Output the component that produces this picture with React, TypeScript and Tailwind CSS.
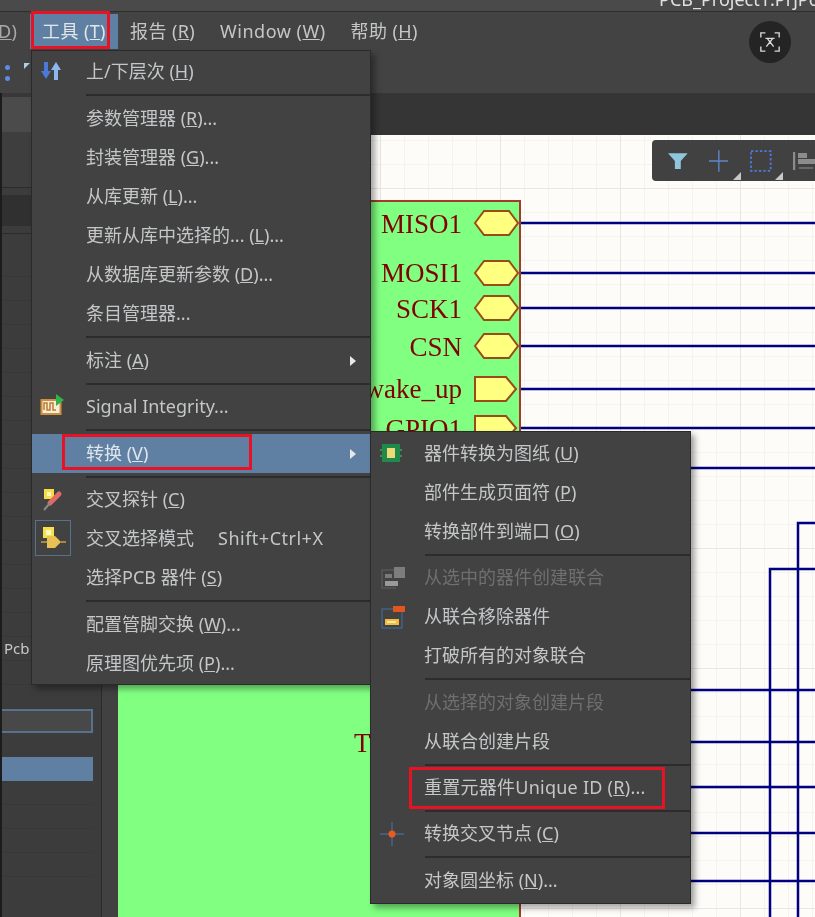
import React from 'react';

const FONT = "[font-family:'Noto_Sans','Noto_Sans_CJK_SC',sans-serif]";

const Sep = ({ h = 'h-[7px]', inset = 'ml-[54px]' }: { h?: string; inset?: string }) => (
  <div className={`${h} ${inset} flex items-center`}>
    <div className="h-[2px] w-full bg-[#2c2c2c]" />
  </div>
);

interface RowProps {
  icon?: React.ReactNode;
  children: React.ReactNode;
  arrow?: boolean;
  active?: boolean;
  disabled?: boolean;
  pad?: string;
}

const Row: React.FC<RowProps> = ({ icon, children, arrow, active, disabled, pad = 'pl-[54px]' }) => (
  <div className={`relative flex h-[39px] items-center ${pad} ${active ? 'bg-[#5f80a2] text-[#dfe5ea]' : ''} ${disabled ? 'text-[#6f6f6f]' : ''}`}>
    {icon}
    <span className="whitespace-nowrap">{children}</span>
    {arrow && <span className="absolute right-[14px] top-[15px] h-0 w-0 border-y-[5px] border-l-[6px] border-y-transparent border-l-[#e8e8e8]" />}
  </div>
);

const ArrowsIcon = () => (
  <svg className="absolute left-[9px] top-[9px]" width="21" height="20" viewBox="0 0 21 20">
    <path d="M3 1h4v9h3l-5 8-5-8h3z" fill="#4a7ad8" />
    <path d="M15 1l5 8h-3v10h-4V9h-3z" fill="#8db8ee" />
  </svg>
);

const SignalIcon = () => (
  <svg className="absolute left-[8px] top-[7px]" width="26" height="24" viewBox="0 0 26 24">
    <rect x="1.5" y="6" width="19" height="14" fill="#f6edd8" stroke="#cf8f3e" strokeWidth="2" />
    <path d="M4 16V9h3v7h3V9h3v7h3" fill="none" stroke="#bd7c2e" strokeWidth="1.5" />
    <path d="M16 0l8 6-8 6z" fill="#2fb34a" />
  </svg>
);

const ProbeIcon = () => (
  <svg className="absolute left-[9px] top-[7px]" width="26" height="26" viewBox="0 0 26 26">
    <rect x="3" y="2" width="10" height="10" fill="#f4dc4a" />
    <rect x="6" y="5" width="4" height="4" fill="#fff6b8" />
    <path d="M9 16l9-9" stroke="#e06a66" strokeWidth="5" strokeLinecap="round" />
    <path d="M9 16l-6 7" stroke="#8a8a8a" strokeWidth="2" />
  </svg>
);

const CrossSelectIcon = () => (
  <div className="absolute left-[3px] top-[1px] flex h-[36px] w-[36px] items-center justify-center border border-[#56728f]">
    <svg width="25" height="24" viewBox="0 0 25 24">
      <rect x="2" y="1" width="11" height="11" fill="#f6e04e" />
      <rect x="5" y="4" width="5" height="5" fill="#fff8c0" />
      <path d="M0 16h6M20 16h5" stroke="#c9a43c" strokeWidth="1.5" />
      <path d="M6 10h8l6 6-6 6H6z" fill="#e8c054" />
    </svg>
  </div>
);

const ChipIcon = () => (
  <svg className="absolute left-[9px] top-[9px]" width="22" height="20" viewBox="0 0 22 20">
    <path d="M0 7h22M0 13h22" stroke="#3da765" strokeWidth="1.5" />
    <rect x="2" y="1" width="18" height="18" fill="#1f8a4a" />
    <rect x="7" y="5" width="8" height="10" fill="#ecd977" />
  </svg>
);

const UnionDisabledIcon = () => (
  <svg className="absolute left-[9px] top-[8px]" width="26" height="24" viewBox="0 0 26 24">
    <path d="M14 4H2v18h14" fill="none" stroke="#585858" strokeWidth="1.5" />
    <rect x="14" y="1" width="11" height="11" fill="#7d7d7d" />
    <rect x="5" y="8" width="7" height="4" fill="#7a7a7a" />
    <rect x="5" y="15" width="13" height="5" fill="#9a9a9a" />
  </svg>
);

const UnionRemoveIcon = () => (
  <svg className="absolute left-[9px] top-[8px]" width="26" height="24" viewBox="0 0 26 24">
    <rect x="2" y="4" width="20" height="19" fill="none" stroke="#3f6288" strokeWidth="1.5" />
    <rect x="13" y="1" width="12" height="6" fill="#e0561f" />
    <rect x="5" y="14" width="14" height="6" fill="#f2bd3c" />
    <rect x="7" y="16" width="9" height="2" fill="#ffe9a0" />
  </svg>
);

const NodeIcon = () => (
  <svg className="absolute left-[9px] top-[8px]" width="24" height="24" viewBox="0 0 24 24">
    <path d="M0 12h24M12 0v24" stroke="#46688c" strokeWidth="1.4" />
    <circle cx="12" cy="12" r="3.5" fill="#ea5a1c" />
  </svg>
);

const Hex = ({ y }: { y: number }) => (
  <path d={`M${357} ${y}l9-12h25l9 12-9 12h-25z`} fill="#ffff80" stroke="#9b4a1a" strokeWidth="2" />
);

const Port = ({ y }: { y: number }) => (
  <path d={`M${357} ${y - 12}h31l10 12-10 12h-31z`} fill="#ffff80" stroke="#9b4a1a" strokeWidth="2" />
);

const Pin = ({ className, children }: { className: string; children: React.ReactNode }) => (
  <div className={`absolute right-[353px] whitespace-nowrap text-[27px] leading-none text-[#800000] [font-family:'Liberation_Serif',serif] ${className}`}>
    {children}
  </div>
);

const Schematic = () => (
  <div className="relative min-h-0 flex-1 overflow-hidden bg-[#fdfcf8] bg-[linear-gradient(#f4f3ee_1px,transparent_1px),linear-gradient(90deg,#f4f3ee_1px,transparent_1px)] bg-[size:24px_24px] bg-[position:-2px_5px]">
    <div className="absolute inset-0 bg-[linear-gradient(#e8e7e2_1px,transparent_1px),linear-gradient(90deg,#e8e7e2_1px,transparent_1px)] bg-[size:120px_120px] bg-[position:22px_53px]" />
    <div className="absolute left-0 top-[65px] h-[717px] w-[403px] border-r-2 border-t-2 border-[#a33a2a] bg-[#80ff80]" />
    <svg className="absolute inset-0" width="697" height="782" viewBox="0 0 697 782">
      <g stroke="#000080" strokeWidth="2.5" fill="none">
        <path d="M403 88h294M403 138h294M403 173h294M403 211h294M403 254h294M403 293h294M403 333h294" />
        <path d="M652 782V434h45M680 782V388h17" />
        <path d="M572 555h125M572 607h125M572 652h125M572 698h125M572 746h125" />
      </g>
      <Hex y={88} />
      <Hex y={138} />
      <Hex y={173} />
      <Hex y={211} />
      <Port y={254} />
      <Port y={293} />
    </svg>
    <Pin className="top-[76px]">MISO1</Pin>
    <Pin className="top-[125px]">MOSI1</Pin>
    <Pin className="top-[161px]">SCK1</Pin>
    <Pin className="top-[199px]">CSN</Pin>
    <Pin className="top-[241px]">wake_up</Pin>
    <Pin className="top-[281px]">GPIO1</Pin>
    <div className="absolute left-[236px] top-[595px] text-[27px] leading-none text-[#800000] [font-family:'Liberation_Serif',serif]">T</div>
    <div className="absolute right-0 top-[5px] flex h-[41px] w-[163px] items-center overflow-hidden rounded-l-[4px] bg-[#414141] pl-[15px]">
      <svg width="22" height="20" viewBox="0 0 22 20">
        <path d="M1 2h20l-7 8v8h-6v-8z" fill="#8fc6dc" />
      </svg>
      <svg className="ml-[20px]" width="20" height="22" viewBox="0 0 20 22">
        <path d="M0 11h20M10 0v22" stroke="#5f86c8" strokeWidth="1.4" />
      </svg>
      <svg className="ml-[22px]" width="22" height="22" viewBox="0 0 22 22">
        <rect x="1" y="1" width="20" height="20" fill="none" stroke="#4f78d8" strokeWidth="1.8" strokeDasharray="2.5 2" />
      </svg>
      <svg className="ml-[21px] shrink-0" width="22" height="20" viewBox="0 0 22 20">
        <path d="M1 1v18" stroke="#8c8c8c" strokeWidth="2.4" />
        <rect x="5" y="2" width="9" height="5" fill="#8c8c8c" />
        <rect x="5" y="8" width="17" height="5" fill="#8c8c8c" />
        <path d="M6 17h14" stroke="#777" strokeWidth="1.4" />
      </svg>
      <span className="absolute bottom-[1px] left-[81px] h-0 w-0 border-b-[8px] border-l-[8px] border-b-[#c8c8c8] border-l-transparent" />
      <span className="absolute bottom-[1px] left-[123px] h-0 w-0 border-b-[8px] border-l-[8px] border-b-[#c8c8c8] border-l-transparent" />
    </div>
  </div>
);

const LeftPanel = () => (
  <div className="flex w-[102px] shrink-0 flex-col border-r border-[#2a2a2a] border-l-2 border-l-[#1c1c1c]">
    <div className="h-[4px] bg-[#383838]" />
    <div className="h-[35px] bg-[#4b4b4b]" />
    <div className="h-[56px] border-b border-[#2c2c2c] bg-[#3e3e3e]" />
    <div className="h-[7px]" />
    <div className="h-[31px] bg-[#303030]" />
    <div className="h-[8px] border-b border-[#2c2c2c]" />
    <div className="h-[43px] border-b border-[#383838]" />
    {Array.from({ length: 15 }).map((_, i) => (
      <div key={i} className="h-[24px] border-b border-[#383838]" />
    ))}
    <div className="flex h-[24px] items-center border-b border-[#383838] pl-[2px] text-[15px] text-[#c8c8c8]">Pcb</div>
    {Array.from({ length: 2 }).map((_, i) => (
      <div key={i} className="h-[24px] border-b border-[#383838]" />
    ))}
    <div className="h-[24px] w-[91px] border-2 border-l-0 border-[#56728f] bg-[#484848]" />
    <div className="h-[24px]" />
    <div className="h-[24px] w-[91px] bg-[#5f80a2]" />
    {Array.from({ length: 4 }).map((_, i) => (
      <div key={i} className="h-[24px] w-[91px] border-b border-[#383838]" />
    ))}
  </div>
);

export default function App() {
  return (
    <div className={`relative flex h-[917px] w-[815px] flex-col overflow-hidden bg-[#3c3c3c] text-[18px] text-[#c4c6c8] blur-[0.4px] ${FONT}`}>
      <div className="relative h-[12px] shrink-0 border-b border-[#2e2e2e] bg-[#4a4a4a]">
        <span className="absolute left-[659px] top-[-14px] whitespace-nowrap text-[18px] text-[#e0e0e0]">PCB_Project1.PrjPcb</span>
      </div>
      <div className="flex h-[38px] shrink-0 items-center bg-[#434343] tracking-[0.4px]">
        <span className="ml-[-2px] w-[32px] whitespace-nowrap text-[#a8a8a8]"><u>D</u>)</span>
        <div className="flex h-[35px] w-[88px] items-center bg-[#5f80a2] pl-[12px] text-[#e2e6ea]">
          <span className="whitespace-nowrap">工具 (<u>T</u>)</span>
        </div>
        <span className="ml-[12px] whitespace-nowrap">报告 (<u>R</u>)</span>
        <span className="ml-[25px] whitespace-nowrap tracking-[0.5px]">Window (<u>W</u>)</span>
        <span className="ml-[25px] whitespace-nowrap">帮助 (<u>H</u>)</span>
      </div>
      <div className="relative h-[43px] shrink-0 bg-[#434343]">
        <span className="absolute left-[5px] top-[15px] h-[5px] w-[5px] rounded-full bg-[#5f8be0]" />
        <span className="absolute left-[5px] top-[26px] h-[5px] w-[5px] rounded-full bg-[#5f8be0]" />
        <span className="absolute left-[24px] top-[13px] h-0 w-0 border-r-[6px] border-t-[6px] border-r-transparent border-t-[#a8d0e8]" />
        <div className="absolute left-[749px] top-[-29px] flex h-[42px] w-[42px] items-center justify-center rounded-full bg-[#242424]">
          <svg width="22" height="22" viewBox="0 0 24 24" fill="none" stroke="#d6d6d6" strokeWidth="1.5">
            <path d="M2 7V2h5M17 2h5v5M22 17v5h-5M7 22H2v-5" />
            <path d="M7 8h10M9 8l3 4-4 5M15 8l-3 4 4 5" />
          </svg>
        </div>
      </div>
      <div className="flex min-h-0 flex-1">
        <LeftPanel />
        <div className="w-[16px] shrink-0 bg-[#414141]" />
        <div className="flex min-w-0 flex-1 flex-col">
          <div className="h-[42px] shrink-0 bg-[#353535]" />
          <Schematic />
        </div>
      </div>

      {/* tools menu */}
      <div className="absolute left-[31px] top-[50px] h-[635px] w-[340px] border border-[#2a2a2a] bg-[#424242] pt-[1px] shadow-[4px_4px_6px_rgba(0,0,0,0.35)]">
        <Row icon={<ArrowsIcon />}>上/下层次 (<u>H</u>)</Row>
        <Sep h="h-[8px]" />
        <Row>参数管理器 (<u>R</u>)...</Row>
        <Row>封装管理器 (<u>G</u>)...</Row>
        <Row>从库更新 (<u>L</u>)...</Row>
        <Row>更新从库中选择的... (<u>L</u>)...</Row>
        <Row>从数据库更新参数 (<u>D</u>)...</Row>
        <Row>条目管理器...</Row>
        <Sep h="h-[8px]" />
        <Row arrow>标注 (<u>A</u>)</Row>
        <Sep />
        <Row icon={<SignalIcon />}>Signal Integrity...</Row>
        <Sep h="h-[8px]" />
        <Row active arrow>转换 (<u>V</u>)</Row>
        <Sep />
        <Row icon={<ProbeIcon />}>交叉探针 (<u>C</u>)</Row>
        <Row icon={<CrossSelectIcon />}>交叉选择模式<span className="ml-[24px] tracking-[0.5px]">Shift+Ctrl+X</span></Row>
        <Row>选择PCB 器件 (<u>S</u>)</Row>
        <Sep h="h-[8px]" />
        <Row>配置管脚交换 (<u>W</u>)...</Row>
        <Row>原理图优先项 (<u>P</u>)...</Row>
      </div>

      {/* convert submenu */}
      <div className="absolute left-[370px] top-[431px] h-[473px] w-[321px] border border-[#2a2a2a] bg-[#424242] pt-[2px] shadow-[4px_4px_6px_rgba(0,0,0,0.35)]">
        <Row pad="pl-[53px]" icon={<ChipIcon />}>器件转换为图纸 (<u>U</u>)</Row>
        <Row pad="pl-[53px]">部件生成页面符 (<u>P</u>)</Row>
        <Row pad="pl-[53px]">转换部件到端口 (<u>O</u>)</Row>
        <Sep />
        <Row pad="pl-[53px]" disabled icon={<UnionDisabledIcon />}>从选中的器件创建联合</Row>
        <Row pad="pl-[53px]" icon={<UnionRemoveIcon />}>从联合移除器件</Row>
        <Row pad="pl-[53px]">打破所有的对象联合</Row>
        <Sep h="h-[8px]" />
        <Row pad="pl-[53px]" disabled>从选择的对象创建片段</Row>
        <Row pad="pl-[53px]">从联合创建片段</Row>
        <Sep />
        <Row pad="pl-[53px]"><span className="tracking-[0.25px]">重置元器件Unique ID (<u>R</u>)...</span></Row>
        <Sep />
        <Row pad="pl-[53px]" icon={<NodeIcon />}>转换交叉节点 (<u>C</u>)</Row>
        <Sep h="h-[8px]" />
        <Row pad="pl-[53px]">对象圆坐标 (<u>N</u>)...</Row>
      </div>

      {/* red annotation boxes */}
      <div className="absolute left-[31px] top-[11px] h-[38px] w-[79px] border-[3px] border-[#e81224]" />
      <div className="absolute left-[62px] top-[434px] h-[36px] w-[190px] border-[3px] border-[#e81224]" />
      <div className="absolute left-[409px] top-[767px] h-[42px] w-[256px] border-[3px] border-[#e81224]" />
    </div>
  );
}
